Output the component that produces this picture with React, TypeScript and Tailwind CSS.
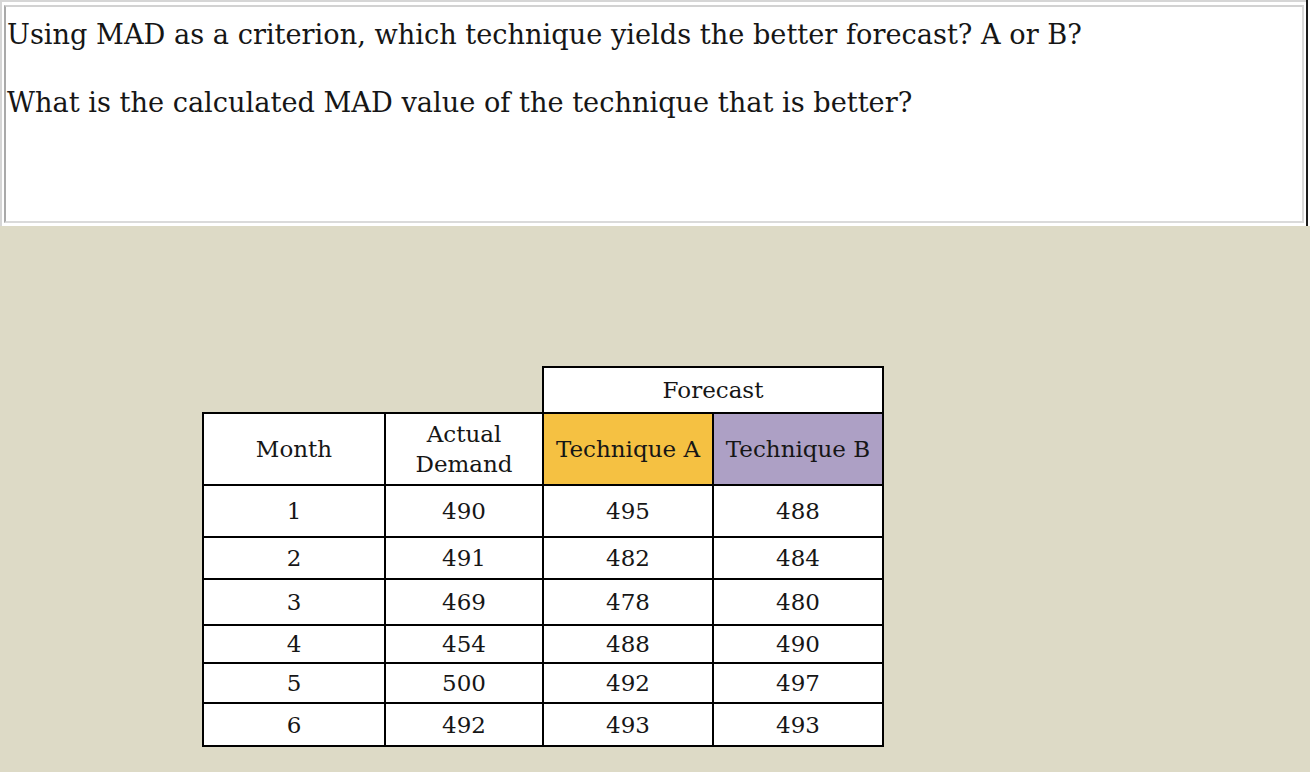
const rows = [
  ["1", "490", "495", "488", "h-[52px]"],
  ["2", "491", "482", "484", "h-[42px]"],
  ["3", "469", "478", "480", "h-[46px]"],
  ["4", "454", "488", "490", "h-[38px]"],
  ["5", "500", "492", "497", "h-[40px]"],
  ["6", "492", "493", "493", "h-[43px]"],
];

export default function App() {
  return (
    <div className="min-h-[772px] bg-[#dddac6] font-['DejaVu_Serif',serif] text-[#161616]">
      {/* question box */}
      <div className="flex h-[226px] bg-white">
        <div className="flex-1 border-t-2 border-l-2 border-[#d6d6d6] pt-[3px] pl-[2px] pr-[2px]">
          <div className="h-[218px] border-2 border-l-[#a9a9a9] border-t-[#d2d2d2] border-r-[#dadada] border-b-[#dadada] px-[1px]">
            <p className="mt-[8px] text-[27.2px] leading-[40px]">
              Using MAD as a criterion, which technique yields the better forecast? A or B?
            </p>
            <p className="mt-[28px] text-[27.2px] leading-[40px]">
              What is the calculated MAD value of the technique that is better?
            </p>
          </div>
        </div>
        <div className="w-[2px] bg-[#1c1c1c]" />
        <div className="w-[2px]" />
      </div>

      {/* table */}
      <div className="pl-[202px] pt-[140px]">
        <table className="border-collapse text-center text-[23px] leading-[30px]">
          <tbody>
            <tr className="h-[46px]">
              <td className="w-[182px]" />
              <td className="w-[158px]" />
              <td colSpan={2} className="border-2 border-black bg-white">
                Forecast
              </td>
            </tr>
            <tr className="h-[72px]">
              <td className="border-2 border-black bg-white">Month</td>
              <td className="border-2 border-black bg-white">
                Actual
                <br />
                Demand
              </td>
              <td className="w-[170px] border-2 border-black bg-[#f5c142]">Technique A</td>
              <td className="w-[170px] border-2 border-black bg-[#ada0c5]">Technique B</td>
            </tr>
            {rows.map((r) => (
              <tr key={r[0]} className={r[4]}>
                <td className="border-2 border-black bg-white">{r[0]}</td>
                <td className="border-2 border-black bg-white">{r[1]}</td>
                <td className="border-2 border-black bg-white">{r[2]}</td>
                <td className="border-2 border-black bg-white">{r[3]}</td>
              </tr>
            ))}
          </tbody>
        </table>
      </div>
    </div>
  );
}
